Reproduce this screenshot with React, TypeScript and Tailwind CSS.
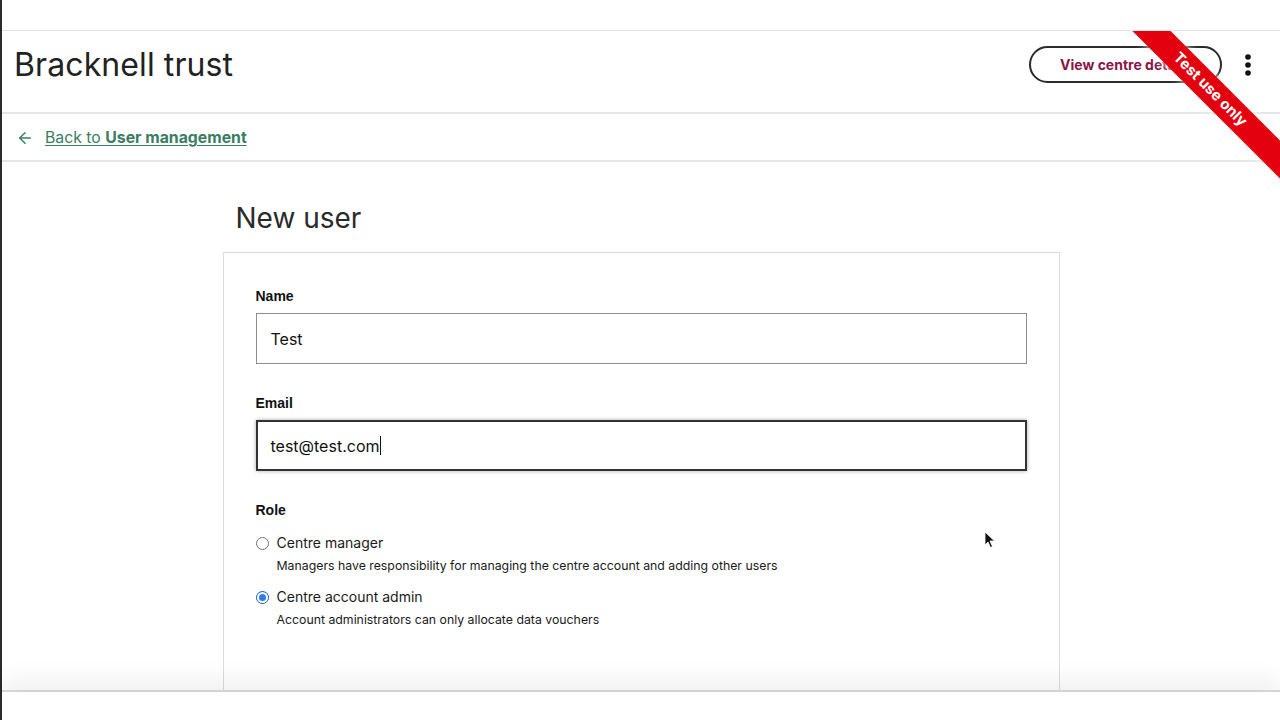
import { ArrowLeft } from 'lucide-react';

const sans = { fontFamily: 'Inter, "Noto Sans", sans-serif' };
const labelFont = { fontFamily: '"Liberation Sans", Arial, sans-serif' };

function Kebab() {
  return (
    <svg width="8" height="24" viewBox="0 0 8 24" aria-hidden="true">
      <circle cx="4" cy="4" r="2.8" fill="#111" />
      <circle cx="4" cy="12" r="2.8" fill="#111" />
      <circle cx="4" cy="20" r="2.8" fill="#111" />
    </svg>
  );
}

function Pointer() {
  return (
    <svg width="12" height="18" viewBox="0 0 12 18" className="absolute left-[982px] top-[531px]" aria-hidden="true">
      <path d="M1 1 L1 14 L4 11 L6.5 16.5 L8.5 15.5 L6 10 L10.5 10 Z" fill="#111" stroke="#fff" strokeWidth="0.8" />
    </svg>
  );
}

function RadioOption({ label, hint, checked }: { label: string; hint: string; checked?: boolean }) {
  return (
    <div className="flex gap-[8px]">
      <div className="h-[22px] flex items-center">
        {checked ? (
          <span className="w-[13px] h-[13px] rounded-full bg-[#1f6fe5] border border-[#1a5fc8] flex items-center justify-center">
            <span className="w-[7px] h-[7px] rounded-full bg-[#2d7df0] ring-2 ring-white" />
          </span>
        ) : (
          <span className="w-[13px] h-[13px] rounded-full border border-[#767676] bg-white" />
        )}
      </div>
      <div>
        <div className="text-[14px] leading-[22px] text-[#1a1a1a]">{label}</div>
        <div className="text-[12.3px] leading-[18px] mt-[3px] text-[#1a1a1a]">{hint}</div>
      </div>
    </div>
  );
}

export default function App() {
  return (
    <div className="relative h-[720px] w-[1280px] overflow-hidden bg-white border-l-2 border-[#2a2a2a]" style={sans}>
      <div className="h-[31px] border-b border-[#e3e3e3]" />

      <div className="relative overflow-hidden h-[689px]">
        <header className="h-[83px] border-b-2 border-[#e6e6e6] flex items-center justify-between pl-[12px] pr-[28px] pb-[14px]">
          <h1 className="text-[32px] leading-none text-[#222] tracking-[0.1px]">Bracknell trust</h1>
          <div className="flex items-center gap-[22px]">
            <button className="h-[37px] w-[193px] rounded-full border-2 border-[#2b2b2b] text-[14px] font-bold text-[#8a1546] flex items-center justify-center">
              View centre details
            </button>
            <Kebab />
          </div>
        </header>

        <nav className="h-[48px] border-b-2 border-[#e6e6e6] flex items-center gap-[11px] pl-[14px] pt-[2px]">
          <ArrowLeft size={18} strokeWidth={2} className="text-[#3b7d63]" />
          <a href="#" className="text-[15.8px] text-[#3b7d63] underline underline-offset-2">
            Back to <span className="font-bold">User management</span>
          </a>
        </nav>

        <main className="w-[837px] mx-auto pt-[40px]">
          <h2 className="text-[28px] leading-[32px] text-[#2a2a2a] pl-[13px] mb-[18px]">New user</h2>
          <section className="border border-[#dcdcdc] px-[32px] pt-[33px] pb-[80px]">
            <div className="text-[14px] leading-[20px] font-bold text-[#111]" style={labelFont}>Name</div>
            <div className="mt-[7px] h-[51px] border border-[#8c8c8c] flex items-center px-[14px] text-[16px] text-[#111]">Test</div>

            <div className="mt-[29px] text-[14px] leading-[20px] font-bold text-[#111]" style={labelFont}>Email</div>
            <div className="mt-[7px] h-[51px] border-2 border-[#333] shadow-[0_0_4px_rgba(0,0,0,0.35)] flex items-center px-[13px] text-[16px] text-[#111]">
              test@test.com<span className="inline-block w-px h-[19px] bg-[#111] ml-px" />
            </div>

            <div className="mt-[29px] text-[14px] leading-[20px] font-bold text-[#111]" style={labelFont}>Role</div>
            <div className="mt-[12px] flex flex-col gap-[11px]">
              <RadioOption label="Centre manager" hint="Managers have responsibility for managing the centre account and adding other users" />
              <RadioOption label="Centre account admin" hint="Account administrators can only allocate data vouchers" checked />
            </div>
          </section>
        </main>

        <div className="absolute left-[1048px] top-[50px] w-[330px] h-[27px] rotate-45 bg-[#e3000f] shadow-[0_0_8px_rgba(255,255,255,0.9)] flex items-center justify-center text-white font-bold text-[15px]">
          <span className="-ml-[14px]">Test use only</span>
        </div>
      </div>

      <Pointer />

      <div className="absolute left-0 right-0 bottom-0 h-[30px] bg-white border-t-2 border-[#d4d4d4] shadow-[0_-12px_22px_rgba(0,0,0,0.06)]" />
    </div>
  );
}
